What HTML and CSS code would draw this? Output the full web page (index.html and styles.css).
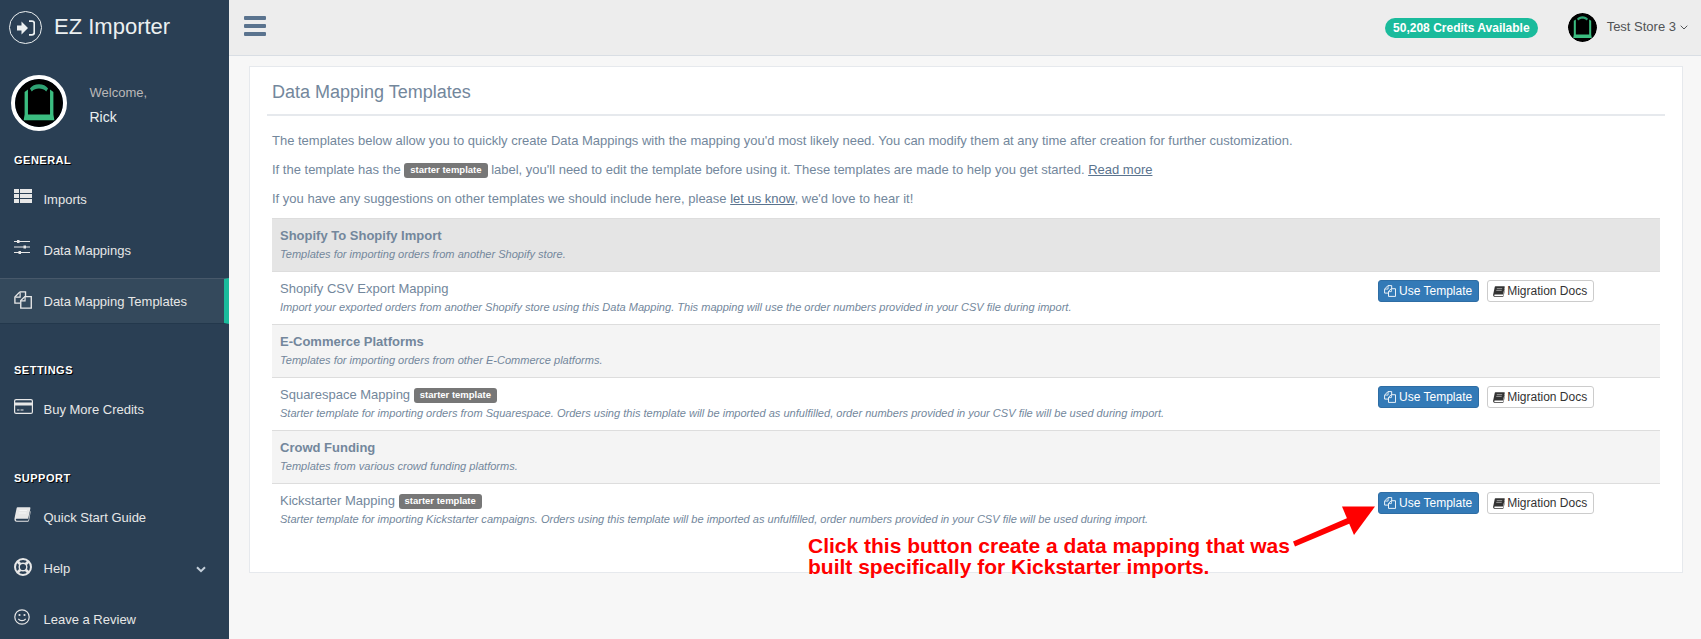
FILE: index.html
```html
<!DOCTYPE html>
<html lang="en">
<head>
  <meta charset="UTF-8">
  <meta name="viewport" content="width=device-width, initial-scale=1.0">
  <title>Data Mapping Templates</title>
  <link rel="stylesheet" href="styles.css">
</head>
<body>
  <svg class="icon-defs" width="0" height="0">
    <symbol id="i-files" viewBox="0 0 20 20">
      <path d="M6.500 1h6.300v5.200M6.500 1L1 6.800v6.700h6" fill="none" stroke="currentColor" stroke-width="1.500"/>
      <path d="M6.800 1.500v5.300H1.500" fill="none" stroke="currentColor" stroke-width="1.300"/>
      <path d="M12 6.200h7.200V19H7.500V10.500z" fill="none" stroke="currentColor" stroke-width="1.500"/>
      <path d="M12.300 6.500v4.500H7.800" fill="none" stroke="currentColor" stroke-width="1.300"/>
    </symbol>
    <symbol id="i-book" viewBox="0 0 20 18">
      <path d="M4 .3h14.800c.6 0 .9.400.8 1L17 13.200c-.2.700-.6 1-1.300 1H3.200c-1.600 0-1.600 2.200 0 2.200h13.200c.4 0 .6-.2.700-.5L19.500 4.500 20 5l-2 10.500c-.3 1.500-1 2.300-2.500 2.300H3C1 17.800-.2 16 .3 13.800L3 1.200C3.100.6 3.500.3 4 .3z" fill="currentColor"/>
      <path d="M6.300 4.200h9M5.500 7.200h9" stroke="#fff" stroke-width="1.100" fill="none" opacity=".75"/>
    </symbol>
    <symbol id="i-avatar" viewBox="0 0 50 50">
      <circle cx="25" cy="25" r="25" fill="#000"/>
      <path d="M10 37V13.500l3.500-2.500V37h23V11l3.500 2.500V37l1 6H9z" fill="#3bbd80"/>
      <path d="M15.500 10C17.500 7 21 5.500 25 5.500s7.500 1.500 9.500 4.500l-2 3c-2-2-4.500-3-7.500-3s-5.500 1-7.500 3z" fill="#2fa274"/>
    </symbol>
  </svg>

  <div class="layout">
    <aside class="sidebar">
      <div class="brand">
        <span class="brand-icon">
          <svg width="18" height="16" viewBox="0 0 18 16"><path d="M0 5.500h4.500V1.500L11 8l-6.500 6.500v-4H0z" fill="currentColor"/><path d="M12 1.200h3c1.500 0 2.300 1 2.300 2.300v9c0 1.300-.8 2.300-2.300 2.300h-3" fill="none" stroke="currentColor" stroke-width="1.800"/></svg>
        </span>
        <span class="brand-name">EZ Importer</span>
      </div>

      <div class="profile">
        <svg class="profile-pic" viewBox="0 0 50 50"><use href="#i-avatar"/></svg>
        <div class="profile-info">
          <span class="welcome">Welcome,</span>
          <span class="profile-name">Rick</span>
        </div>
      </div>

      <h3 class="menu-title">General</h3>
      <a class="menu-item">
        <svg class="menu-icon" width="18" height="14" viewBox="0 0 18 14"><path d="M0 0h5v4H0zM6 0h12v4H6zM0 5h5v4H0zM6 5h12v4H6zM0 10h5v4H0zM6 10h12v4H6z" fill="currentColor"/></svg>
        Imports
      </a>
      <a class="menu-item">
        <svg class="menu-icon" width="16" height="14" viewBox="0 0 16 14"><path d="M0 1.500h16M0 7h16M0 12.500h16" stroke="currentColor" stroke-width="1.200"/><path d="M3 0h2.500v3H3zM9.500 5.500H12v3H9.500zM4.500 11H7v3H4.500z" fill="currentColor"/></svg>
        Data Mappings
      </a>
      <a class="menu-item menu-item-active">
        <svg class="menu-icon" width="18" height="18" viewBox="0 0 20 20"><use href="#i-files"/></svg>
        Data Mapping Templates
      </a>

      <h3 class="menu-title menu-title-gap">Settings</h3>
      <a class="menu-item">
        <svg class="menu-icon" width="19" height="15" viewBox="0 0 19 15"><rect x=".6" y=".6" width="17.800" height="13.800" rx="1.500" fill="none" stroke="currentColor" stroke-width="1.200"/><path d="M1 3.500h17v3H1zM3 10.500h2.500v1H3zM6.500 10.500h3v1h-3z" fill="currentColor"/></svg>
        Buy More Credits
      </a>

      <h3 class="menu-title menu-title-gap">Support</h3>
      <a class="menu-item">
        <svg class="menu-icon" width="17" height="15" viewBox="0 0 20 18"><use href="#i-book"/></svg>
        Quick Start Guide
      </a>
      <a class="menu-item">
        <svg class="menu-icon" width="18" height="18" viewBox="0 0 18 18"><circle cx="9" cy="9" r="8" fill="none" stroke="currentColor" stroke-width="2"/><circle cx="9" cy="9" r="3.800" fill="none" stroke="currentColor" stroke-width="1.400"/><path d="M3.300 3.300l3 3M14.700 3.300l-3 3M3.300 14.700l3-3M14.700 14.700l-3-3" stroke="currentColor" stroke-width="2.800"/></svg>
        Help
        <svg class="menu-chevron" width="10" height="7" viewBox="0 0 10 7"><path d="M1 1.200l4 4 4-4" fill="none" stroke="currentColor" stroke-width="2"/></svg>
      </a>
      <a class="menu-item">
        <svg class="menu-icon" width="16" height="16" viewBox="0 0 16 16"><circle cx="8" cy="8" r="7.200" fill="none" stroke="currentColor" stroke-width="1.200"/><circle cx="5.500" cy="6" r="1.100" fill="currentColor"/><circle cx="10.500" cy="6" r="1.100" fill="currentColor"/><path d="M4.300 9.800c1.800 2.400 5.600 2.400 7.400 0" fill="none" stroke="currentColor" stroke-width="1.200"/></svg>
        Leave a Review
      </a>
    </aside>

    <div class="main">
      <header class="topbar">
        <div class="hamburger"><span></span><span></span><span></span></div>
        <span class="credits">50,208 Credits Available</span>
        <svg class="store-pic" viewBox="0 0 50 50"><use href="#i-avatar"/></svg>
        <span class="store-name">Test Store 3</span>
        <svg class="store-chevron" width="8" height="5" viewBox="0 0 8 5"><path d="M.7.7L4 4 7.300.7" fill="none" stroke="currentColor" stroke-width="1"/></svg>
      </header>

      <section class="panel">
        <h2 class="panel-title">Data Mapping Templates</h2>
        <div class="panel-body">
          <p>The templates below allow you to quickly create Data Mappings with the mapping you'd most likely need. You can modify them at any time after creation for further customization.</p>
          <p>If the template has the <span class="label">starter template</span> label, you'll need to edit the template before using it. These templates are made to help you get started. <a class="link">Read more</a></p>
          <p>If you have any suggestions on other templates we should include here, please <a class="link">let us know</a>, we'd love to hear it!</p>

          <div class="templates">
            <div class="row row-group row-group-first">
              <div class="row-text">
                <div class="row-title">Shopify To Shopify Import</div>
                <div class="row-desc">Templates for importing orders from another Shopify store.</div>
              </div>
            </div>
            <div class="row">
              <div class="row-text">
                <div class="row-title">Shopify CSV Export Mapping</div>
                <div class="row-desc">Import your exported orders from another Shopify store using this Data Mapping. This mapping will use the order numbers provided in your CSV file during import.</div>
              </div>
              <div class="row-actions">
                <a class="btn btn-primary"><svg width="12" height="12" viewBox="0 0 20 20"><use href="#i-files"/></svg> Use Template</a>
                <a class="btn btn-default"><svg width="12" height="11" viewBox="0 0 20 18"><use href="#i-book"/></svg> Migration Docs</a>
              </div>
            </div>
            <div class="row row-group">
              <div class="row-text">
                <div class="row-title">E-Commerce Platforms</div>
                <div class="row-desc">Templates for importing orders from other E-Commerce platforms.</div>
              </div>
            </div>
            <div class="row">
              <div class="row-text">
                <div class="row-title">Squarespace Mapping <span class="label">starter template</span></div>
                <div class="row-desc">Starter template for importing orders from Squarespace. Orders using this template will be imported as unfulfilled, order numbers provided in your CSV file will be used during import.</div>
              </div>
              <div class="row-actions">
                <a class="btn btn-primary"><svg width="12" height="12" viewBox="0 0 20 20"><use href="#i-files"/></svg> Use Template</a>
                <a class="btn btn-default"><svg width="12" height="11" viewBox="0 0 20 18"><use href="#i-book"/></svg> Migration Docs</a>
              </div>
            </div>
            <div class="row row-group">
              <div class="row-text">
                <div class="row-title">Crowd Funding</div>
                <div class="row-desc">Templates from various crowd funding platforms.</div>
              </div>
            </div>
            <div class="row row-last">
              <div class="row-text">
                <div class="row-title">Kickstarter Mapping <span class="label">starter template</span></div>
                <div class="row-desc">Starter template for importing Kickstarter campaigns. Orders using this template will be imported as unfulfilled, order numbers provided in your CSV file will be used during import.</div>
              </div>
              <div class="row-actions">
                <a class="btn btn-primary"><svg width="12" height="12" viewBox="0 0 20 20"><use href="#i-files"/></svg> Use Template</a>
                <a class="btn btn-default"><svg width="12" height="11" viewBox="0 0 20 18"><use href="#i-book"/></svg> Migration Docs</a>
              </div>
            </div>
          </div>
        </div>
      </section>
    </div>
  </div>

  <!-- screenshot annotation, sits over the page -->
  <div class="callout">Click this button create a data mapping that was<br>built specifically for Kickstarter imports.</div>
  <svg class="callout-arrow" width="92" height="45" viewBox="0 0 92 45">
    <path d="M1 38.500L60 13l2.500 5.500L3 43.500z" fill="#ff0000"/>
    <path d="M50 3.500h33L62 32z" fill="#ff0000"/>
  </svg>
</body>
</html>
```
FILE: styles.css
```css
* {
  box-sizing: border-box;
}

body {
  margin: 0;
  height: 100vh;
  overflow: hidden;
  font-family: "Liberation Sans", Arial, sans-serif;
  font-size: 13px;
  line-height: 1.471;
  color: #73879c;
  background-color: #f7f7f7;
}

.icon-defs {
  position: absolute;
}

.layout {
  display: flex;
  height: 100%;
}

/* sidebar */
.sidebar {
  flex: 0 0 229px;
  background-color: #2a3f54;
  color: #e7e7e7;
  overflow: hidden;
}

.brand {
  display: flex;
  align-items: center;
  height: 55px;
  padding-left: 9px;
  color: #ecf0f1;
}

.brand-icon {
  display: flex;
  align-items: center;
  justify-content: center;
  width: 33px;
  height: 33px;
  border: 1px solid #ecf0f1;
  border-radius: 50%;
}

.brand-name {
  margin-left: 12px;
  font-size: 22px;
}

.profile {
  display: flex;
  height: 89px;
  padding: 20px 0 0 11px;
}

.profile-pic {
  width: 56px;
  height: 56px;
  border: 4px solid #fff;
  border-radius: 50%;
}

.profile-info {
  display: flex;
  flex-direction: column;
  margin-left: 22.5px;
  padding-top: 8px;
}

.welcome {
  color: #bab8b8;
  line-height: 19px;
}

.profile-name {
  margin-top: 5px;
  font-size: 14px;
  line-height: 20px;
  color: #ecf0f1;
}

.menu-title {
  display: flex;
  align-items: center;
  height: 33px;
  margin: 0;
  padding-left: 14px;
  font-size: 11px;
  font-weight: bold;
  letter-spacing: .5px;
  text-transform: uppercase;
  color: #fff;
  text-shadow: 1px 1px #000;
}

.menu-title-gap {
  margin-top: 29px;
}

.menu-item-active + .menu-title-gap {
  margin-top: 30px;
}

.menu-item {
  position: relative;
  display: flex;
  align-items: center;
  height: 46px;
  margin-bottom: 5px;
  padding-left: 43.5px;
  color: #e7e7e7;
}

.menu-icon {
  position: absolute;
  left: 14px;
  top: 12px;
  color: #e7e7e7;
}

.menu-chevron {
  margin-left: auto;
  margin-right: 23px;
  color: #c4cfda;
}

.menu-item-active {
  margin-top: -1px;
  margin-bottom: 6px;
  padding-top: 1px;
  border-top: 1px solid #47586a;
  border-bottom: 1px solid #23384c;
  border-right: 5px solid #1abb9c;
  background-color: #34495c;
}

/* top bar */
.main {
  flex: 1;
  min-width: 0;
}

.topbar {
  display: flex;
  align-items: center;
  height: 56px;
  padding: 0 13px 0 15px;
  background-color: #ededed;
  border-bottom: 1px solid #d9dee4;
}

.hamburger {
  display: flex;
  flex-direction: column;
  gap: 4px;
  width: 22px;
  margin-bottom: 3px;
}

.hamburger span {
  height: 4px;
  border-radius: 1px;
  background-color: #5a738e;
}

.credits {
  margin-left: auto;
  padding: 0 8px;
  height: 20px;
  line-height: 20px;
  border-radius: 10px;
  font-size: 12px;
  font-weight: bold;
  color: #fff;
  background-color: #1abb9c;
}

.store-pic {
  width: 29px;
  height: 29px;
  margin-left: 30px;
  border-radius: 50%;
}

.store-name {
  margin-left: 10px;
  margin-bottom: 2px;
  color: #515356;
}

.store-chevron {
  margin-left: 4px;
  color: #515356;
}

/* panel */
.panel {
  margin: 10px 18px 0 20px;
  height: 507px;
  padding: 10px 17px;
  background-color: #fff;
  border: 1px solid #e6e9ed;
}

.panel-title {
  margin: 0;
  padding: 1px 5px 0;
  height: 39px;
  font-size: 18px;
  font-weight: 400;
  line-height: 28px;
  border-bottom: 2px solid #e6e9ed;
}

.panel-body {
  padding: 15px 5px 0;
}

.panel-body p {
  margin: 0 0 10px;
}

.link {
  color: #5a738e;
  text-decoration: underline;
}

.label {
  display: inline-block;
  padding: 2px 6px 3px;
  font-size: 9.5px;
  font-weight: bold;
  line-height: 10px;
  color: #fff;
  background-color: #777;
  border-radius: 3px;
  vertical-align: 1px;
}

/* template rows */
.templates {
  border-top: 1px solid #ddd;
}

.row {
  display: flex;
  height: 53px;
  padding: 8px 8px 0;
  border-bottom: 1px solid #ddd;
}

.row-last {
  border-bottom: none;
}

.row-group {
  background-color: #f4f4f4;
}

.row-group-first {
  background-color: #e5e5e5;
}

.row-group .row-title {
  font-weight: bold;
}

.row-text {
  flex: 1;
  min-width: 0;
}

.row-title {
  line-height: 18px;
  margin-bottom: 1px;
}

.row-desc {
  font-size: 11.05px;
  font-style: italic;
  line-height: 16px;
}

.row-actions {
  display: flex;
  flex: 0 0 274px;
  gap: 8px;
  align-items: flex-start;
}

.btn {
  display: inline-flex;
  align-items: center;
  gap: 3px;
  height: 22px;
  padding: 0 6px 0 5px;
  font-size: 12px;
  border-radius: 3px;
  border: 1px solid transparent;
}

.btn-primary {
  color: #fff;
  background-color: #337ab7;
  border-color: #2e6da4;
}

.btn-default {
  gap: 2px;
  color: #333;
  background-color: #fff;
  border-color: #ccc;
}

/* annotation */
.callout {
  position: absolute;
  left: 808px;
  top: 535px;
  font-size: 21px;
  font-weight: bold;
  line-height: 21px;
  color: #ff0000;
}

.callout-arrow {
  position: absolute;
  left: 1292px;
  top: 503px;
}
```
